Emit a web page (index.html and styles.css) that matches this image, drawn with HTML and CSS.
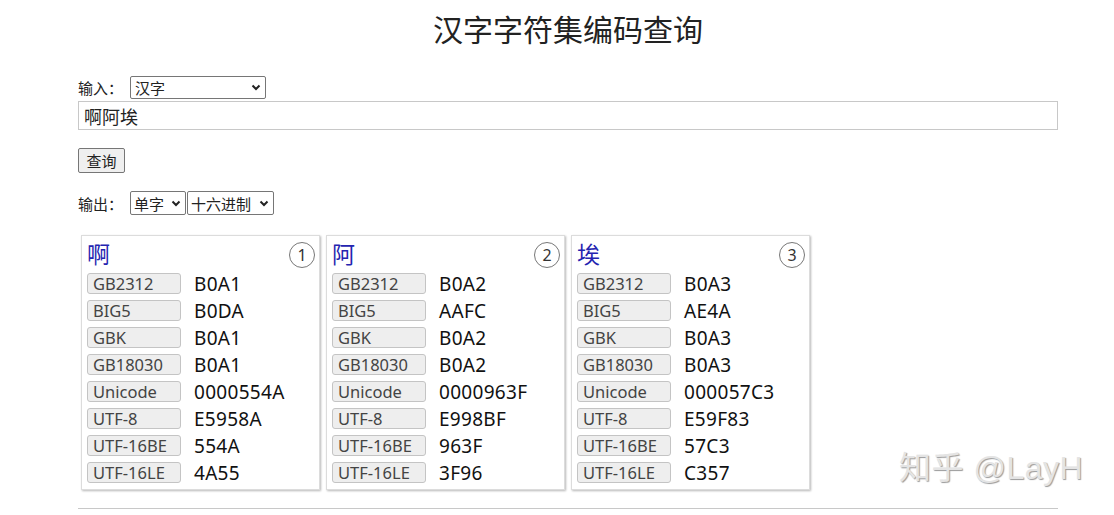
FILE: index.html
```html
<!DOCTYPE html>
<html lang="zh-CN">
<head>
<meta charset="utf-8">
<title>汉字字符集编码查询</title>
<link rel="stylesheet" href="styles.css">
</head>
<body>
<div class="page">
  <h1 class="title">汉字字符集编码查询</h1>
  <div class="form-row first">
    <span class="label">输入：</span>
    <select class="sel sel-input"><option>汉字</option></select>
  </div>
  <input class="text-input" type="text" value="啊阿埃">
  <div class="btn-row"><button class="btn">查询</button></div>
  <div class="form-row out">
    <span class="label">输出：</span>
    <select class="sel sel-mode"><option>单字</option></select><select class="sel sel-base"><option>十六进制</option></select>
  </div>

  <div class="cards">
    <div class="card">
      <div class="card-head"><span class="char">啊</span><span class="num">1</span></div>
      <div class="row"><span class="enc">GB2312</span><span class="val">B0A1</span></div>
      <div class="row"><span class="enc">BIG5</span><span class="val">B0DA</span></div>
      <div class="row"><span class="enc">GBK</span><span class="val">B0A1</span></div>
      <div class="row"><span class="enc">GB18030</span><span class="val">B0A1</span></div>
      <div class="row"><span class="enc">Unicode</span><span class="val">0000554A</span></div>
      <div class="row"><span class="enc">UTF-8</span><span class="val">E5958A</span></div>
      <div class="row"><span class="enc">UTF-16BE</span><span class="val">554A</span></div>
      <div class="row"><span class="enc">UTF-16LE</span><span class="val">4A55</span></div>
    </div>
    <div class="card">
      <div class="card-head"><span class="char">阿</span><span class="num">2</span></div>
      <div class="row"><span class="enc">GB2312</span><span class="val">B0A2</span></div>
      <div class="row"><span class="enc">BIG5</span><span class="val">AAFC</span></div>
      <div class="row"><span class="enc">GBK</span><span class="val">B0A2</span></div>
      <div class="row"><span class="enc">GB18030</span><span class="val">B0A2</span></div>
      <div class="row"><span class="enc">Unicode</span><span class="val">0000963F</span></div>
      <div class="row"><span class="enc">UTF-8</span><span class="val">E998BF</span></div>
      <div class="row"><span class="enc">UTF-16BE</span><span class="val">963F</span></div>
      <div class="row"><span class="enc">UTF-16LE</span><span class="val">3F96</span></div>
    </div>
    <div class="card">
      <div class="card-head"><span class="char">埃</span><span class="num">3</span></div>
      <div class="row"><span class="enc">GB2312</span><span class="val">B0A3</span></div>
      <div class="row"><span class="enc">BIG5</span><span class="val">AE4A</span></div>
      <div class="row"><span class="enc">GBK</span><span class="val">B0A3</span></div>
      <div class="row"><span class="enc">GB18030</span><span class="val">B0A3</span></div>
      <div class="row"><span class="enc">Unicode</span><span class="val">000057C3</span></div>
      <div class="row"><span class="enc">UTF-8</span><span class="val">E59F83</span></div>
      <div class="row"><span class="enc">UTF-16BE</span><span class="val">57C3</span></div>
      <div class="row"><span class="enc">UTF-16LE</span><span class="val">C357</span></div>
    </div>
  </div>
  <hr class="rule">
</div>
<div class="watermark">知乎 @LayH</div>
</body>
</html>
```

FILE: styles.css
```css
html, body {
  margin: 0;
  padding: 0;
  background: #fff;
}
body {
  font-family: "Noto Sans", "Noto Sans CJK SC", sans-serif;
  color: #222;
  overflow: hidden;
}
.page {
  padding-left: 78px;
  width: 980px;
}
.title {
  margin: 8px 0 0 0;
  width: 980px;
  text-align: center;
  font-weight: normal;
  font-size: 30px;
  line-height: 40px;
  color: #222;
  font-family: "Noto Sans CJK SC", sans-serif;
}
.form-row {
  display: flex;
  align-items: center;
  height: 23px;
}
.form-row.first {
  margin-top: 28px;
}
.form-row.out {
  margin-top: 18px;
  height: 24px;
}
.label {
  font-size: 15px;
  width: 52px;
  color: #222;
  font-family: "Noto Sans CJK SC", sans-serif;
}
.sel {
  -webkit-appearance: none;
  appearance: none;
  height: 23px;
  border: 1px solid #767676;
  border-radius: 2px;
  background-color: #fff;
  background-image: url("data:image/svg+xml;utf8,<svg xmlns='http://www.w3.org/2000/svg' width='10' height='7' viewBox='0 0 10 7'><path d='M1.5 1.5 L5 5 L8.5 1.5' fill='none' stroke='%23222' stroke-width='2'/></svg>");
  background-repeat: no-repeat;
  background-position: right 4px center;
  font-family: "Noto Sans CJK SC", sans-serif;
  font-size: 15px;
  color: #222;
  padding: 0 16px 0 4px;
  margin: 0;
  line-height: 21px;
}
.sel-input {
  width: 136px;
}
.sel-mode {
  width: 56px;
  height: 24px;
  padding-left: 3px;
}
.sel-base {
  width: 87px;
  height: 24px;
  margin-left: 1px;
  padding-left: 3px;
}
.text-input {
  display: block;
  box-sizing: border-box;
  margin: 2px 0 0 0;
  width: 980px;
  height: 29px;
  border: 1px solid #c8c8c8;
  padding: 0 5px;
  font-size: 18px;
  color: #222;
  font-family: "Noto Sans CJK SC", sans-serif;
  outline: none;
}
.btn-row {
  margin-top: 18px;
  height: 25px;
}
.btn {
  box-sizing: border-box;
  width: 47px;
  height: 25px;
  border: 1px solid #767676;
  border-radius: 2px;
  background: #efefef;
  font-size: 15px;
  color: #222;
  font-family: "Noto Sans CJK SC", sans-serif;
  padding: 0;
  margin: 0;
}
.cards {
  display: flex;
  gap: 6px;
  margin-top: 20px;
  margin-left: 3px;
}
.card {
  box-sizing: border-box;
  width: 239px;
  height: 255px;
  border: 1px solid #dcdcdc;
  box-shadow: 1px 1px 2px #b8b8b8;
  padding: 4px 4px 0 5px;
}
.card-head {
  display: flex;
  justify-content: space-between;
  align-items: flex-start;
  height: 30px;
}
.char {
  font-size: 23px;
  line-height: 28px;
  margin-top: -1px;
  color: #2424b0;
  font-family: "Noto Sans CJK SC", sans-serif;
}
.num {
  box-sizing: border-box;
  width: 26px;
  height: 26px;
  border: 1px solid #777;
  border-radius: 50%;
  display: flex;
  align-items: center;
  justify-content: center;
  font-size: 16px;
  color: #333;
  margin-top: 2px;
}
.row {
  display: flex;
  align-items: center;
  height: 27px;
}
.enc {
  box-sizing: border-box;
  width: 94px;
  height: 21px;
  background: #eeeeee;
  border: 1px solid #c4c4c4;
  border-radius: 3px;
  padding-left: 5px;
  font-size: 16.5px;
  line-height: 19px;
  color: #444;
}
.val {
  margin-left: 13px;
  font-size: 19px;
  letter-spacing: 0.3px;
  color: #111;
}
.rule {
  margin: 18px 0 0 0;
  border: 0;
  border-top: 1px solid #c8c8c8;
  width: 980px;
}
.watermark {
  position: absolute;
  left: 899px;
  top: 442px;
  font-size: 32px;
  letter-spacing: 0.5px;
  color: #e4e4e4;
  text-shadow: 1px 1px 1px #9a9a9a;
  font-family: "Liberation Sans", "Noto Sans CJK SC", sans-serif;
}
```
